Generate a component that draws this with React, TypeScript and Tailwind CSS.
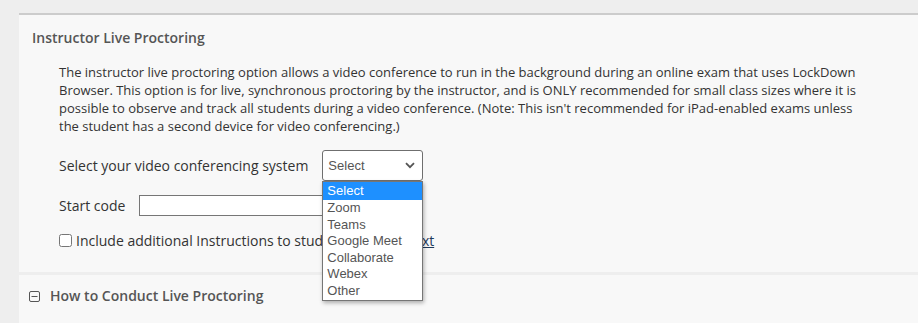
import React from "react";

const options = ["Select", "Zoom", "Teams", "Google Meet", "Collaborate", "Webex", "Other"];

function VideoSelect() {
  return (
    <div className="relative w-[101px]">
      <div className="flex h-[31px] items-center justify-between rounded-[3px] border border-[#6f6f6f] bg-white pl-[5px] pr-[7px] font-['Liberation_Sans',Arial,sans-serif] text-[13px] text-[#555]">
        <span>Select</span>
        <svg width="10" height="7" viewBox="0 0 10 7" fill="none">
          <path d="M1 1.2 5 5.2 9 1.2" stroke="#555" strokeWidth="1.8" />
        </svg>
      </div>
      <ul className="absolute left-0 top-full z-10 w-full border border-[#767676] bg-white font-['Liberation_Sans',Arial,sans-serif] text-[13px] text-[#555] shadow-[1px_2px_4px_rgba(0,0,0,0.3)]">
        {options.map((o, idx) => (
          <li
            key={o}
            className={
              idx === 0
                ? "h-[18px] bg-[#1e90ff] pl-[4px] leading-[18px] text-white"
                : "h-[16.6px] pl-[4px] leading-[16.6px]"
            }
          >
            {o}
          </li>
        ))}
      </ul>
    </div>
  );
}

export default function App() {
  return (
    <div className="h-[323px] overflow-hidden bg-[#eeeeee] pl-[19px] pt-[13px] font-['Open_Sans',sans-serif] text-[#333]">
      <section className="border-t-2 border-[#cccccc] bg-[#f8f8f8] pb-[23px] pl-[13px] pt-[13px]">
        <h2 className="text-[14px] font-semibold leading-[20px] text-[#555]">
          Instructor Live Proctoring
        </h2>
        <div className="ml-[27px] mt-[15px]">
          <p className="w-[805px] text-[13px] leading-[18px]">
            The instructor live proctoring option allows a video conference to run in the background during an online
            exam that uses LockDown Browser. This option is for live, synchronous proctoring by the instructor, and is
            ONLY recommended for small class sizes where it is possible to observe and track all students during a video
            conference. (Note: This isn't recommended for iPad-enabled exams unless the student has a second device for
            video conferencing.)
          </p>
          <div className="mt-[15px] flex items-center gap-[14px] text-[14px]">
            <label>Select your video conferencing system</label>
            <VideoSelect />
          </div>
          <div className="mt-[14px] flex items-center gap-[14px] text-[14px]">
            <label>Start code</label>
            <input className="h-[21px] w-[200px] border border-[#767676] bg-white" />
          </div>
          <div className="mt-[15px] flex h-[18px] items-center gap-[4px] text-[14px]">
            <input type="checkbox" className="m-0 h-[13px] w-[13px]" />
            <span>
              Include additional Instructions to students{" "}
              <a href="#" className="text-[#1f3a5c] underline">
                Custom text
              </a>
            </span>
          </div>
        </div>
      </section>
      <section className="mt-[3px] flex h-[60px] items-start gap-[10px] bg-[#f8f8f8] pl-[10px] pt-[11px]">
        <svg width="11" height="11" viewBox="0 0 11 11" className="mt-[5px]" fill="none">
          <rect x="0.5" y="0.5" width="10" height="10" rx="1.5" stroke="#555" />
          <path d="M2.5 5.5h6" stroke="#555" />
        </svg>
        <h3 className="text-[14px] font-semibold leading-[20px] text-[#555]">How to Conduct Live Proctoring</h3>
      </section>
    </div>
  );
}
